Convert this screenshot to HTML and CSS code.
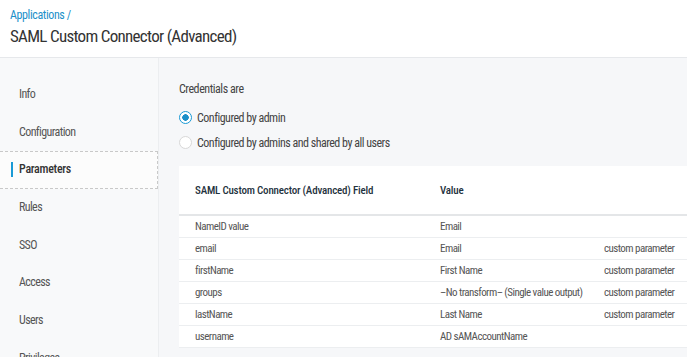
FILE: index.html
```html
<!DOCTYPE html>
<html lang="en">
<head>
    <meta charset="UTF-8">
    <title>SAML Custom Connector (Advanced)</title>
    <link rel="stylesheet" href="styles.css">
</head>
<body>
    <div class="header">
        <a class="crumb" href="#">Applications /</a>
        <h1>SAML Custom Connector (Advanced)</h1>
    </div>
    <div class="layout">
        <ul class="sidebar">
            <li>Info</li>
            <li>Configuration</li>
            <li class="active">Parameters</li>
            <li>Rules</li>
            <li>SSO</li>
            <li>Access</li>
            <li>Users</li>
            <li>Privileges</li>
        </ul>
        <div class="main">
            <p class="label">Credentials are</p>
            <label class="radio"><span class="dot checked"></span>Configured by admin</label>
            <label class="radio"><span class="dot"></span>Configured by admins and shared by all users</label>
            <div class="card">
                <table>
                    <thead>
                        <tr>
                            <th class="col-field">SAML Custom Connector (Advanced) Field</th>
                            <th class="col-value">Value</th>
                            <th></th>
                        </tr>
                    </thead>
                    <tbody>
                        <tr><td>NameID value</td><td>Email</td><td></td></tr>
                        <tr><td>email</td><td>Email</td><td>custom parameter</td></tr>
                        <tr><td>firstName</td><td>First Name</td><td>custom parameter</td></tr>
                        <tr><td>groups</td><td>–No transform– (Single value output)</td><td>custom parameter</td></tr>
                        <tr><td>lastName</td><td>Last Name</td><td>custom parameter</td></tr>
                        <tr><td>username</td><td>AD sAMAccountName</td><td></td></tr>
                    </tbody>
                </table>
            </div>
        </div>
    </div>
</body>
</html>
```

FILE: styles.css
```css
body {
    margin: 0;
    font-family: Roboto, 'Liberation Sans', sans-serif;
    font-stretch: 75%;
    color: #333;
    background: #f6f7f9;
    overflow: hidden;
}

.header {
    background: white;
    padding: 7px 10px 0;
    height: 50px;
    border-bottom: 1px solid #e6e8eb;
}

.crumb {
    display: block;
    color: #1a8fc9;
    font-size: 12px;
    letter-spacing: -0.4px;
    text-decoration: none;
    line-height: 16px;
}

h1 {
    margin: 1px 0 0;
    font-size: 17px;
    font-weight: normal;
    letter-spacing: -0.7px;
    line-height: 24px;
    color: #333;
}

.layout {
    display: flex;
}

.sidebar {
    list-style: none;
    margin: 0;
    padding: 18px 0 0;
    width: 158px;
    background: #f8f9fa;
    border-right: 1px solid #eceef0;
    flex-shrink: 0;
    height: 320px;
}

.sidebar li {
    height: 37.7px;
    line-height: 37.7px;
    padding-left: 19px;
    font-size: 12px;
    letter-spacing: -0.6px;
    color: #555;
}

.sidebar li.active {
    position: relative;
    background: #fcfcfc;
    border-top: 1px dashed #c9c9c9;
    border-bottom: 1px dashed #c9c9c9;
    border-right: 1px dashed #c9c9c9;
    height: 35.7px;
    line-height: 35.7px;
    font-weight: 500;
    letter-spacing: -0.3px;
    color: #333;
}

.sidebar li.active::before {
    content: "";
    position: absolute;
    left: 11px;
    top: 10px;
    width: 2px;
    height: 15px;
    background: #1a9ad6;
}

.main {
    flex: 1;
    padding: 23px 0 0 20px;
    min-width: 0;
}

.label {
    margin: 0 0 8px;
    font-size: 12px;
    letter-spacing: -0.45px;
    color: #444;
    line-height: 16px;
}

.radio {
    display: flex;
    align-items: center;
    gap: 5px;
    font-size: 12px;
    letter-spacing: -0.5px;
    color: #444;
    height: 25px;
}

.dot {
    width: 13px;
    height: 13px;
    border-radius: 50%;
    border: 1px solid #d8d8d8;
    background: white;
    box-sizing: border-box;
    flex-shrink: 0;
}

.dot.checked {
    border: 1.5px solid #1a9ad6;
    background: radial-gradient(circle, #1a8fc9 0 3px, white 3.5px);
}

.card {
    margin-top: 11px;
    background: white;
    width: 560px;
}

table {
    width: 100%;
    border-collapse: collapse;
    font-size: 11px;
    letter-spacing: -0.55px;
    white-space: nowrap;
}

th {
    text-align: left;
    font-weight: 500;
    letter-spacing: -0.2px;
    color: #1f3340;
    height: 48px;
    border-bottom: 2px solid #e4e6e8;
    padding: 0;
}

.col-field {
    padding-left: 16px;
    width: 245px;
}

.col-value {
    width: 164px;
}

td {
    height: 21px;
    padding: 0;
    color: #555;
    border-bottom: 1px solid #eceef0;
}

td:first-child {
    padding-left: 16px;
}
```
